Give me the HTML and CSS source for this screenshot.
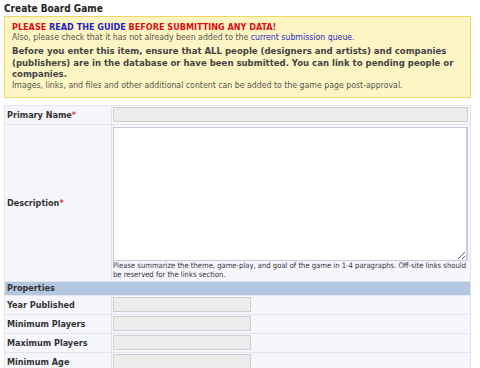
FILE: index.html
```html
<!DOCTYPE html>
<html lang="en">
<head>
    <meta charset="UTF-8">
    <title>Create Board Game</title>
    <link rel="stylesheet" href="styles.css">
</head>
<body>
    <h1 class="page-title">Create Board Game</h1>

    <div class="notice">
        <p class="notice-alert">PLEASE <a href="#" class="guide">READ THE GUIDE</a> BEFORE SUBMITTING ANY DATA!</p>
        <p class="notice-small">Also, please check that it has not already been added to the <a href="#">current submission queue</a>.</p>
        <p class="notice-strong">Before you enter this item, ensure that ALL people (designers and artists) and companies (publishers) are in the database or have been submitted. You can link to pending people or companies.</p>
        <p class="notice-small">Images, links, and files and other additional content can be added to the game page post-approval.</p>
    </div>

    <table class="form-table">
        <tr>
            <th>Primary Name<span class="req">*</span></th>
            <td><input type="text" class="field field-wide"></td>
        </tr>
        <tr>
            <th>Description<span class="req">*</span></th>
            <td>
                <textarea class="field-area"></textarea>
                <p class="help">Please summarize the theme, game-play, and goal of the game in 1-4 paragraphs. Off-site links should be reserved for the links section.</p>
            </td>
        </tr>
        <tr class="section">
            <th colspan="2">Properties</th>
        </tr>
        <tr>
            <th>Year Published</th>
            <td><input type="text" class="field field-short"></td>
        </tr>
        <tr>
            <th>Minimum Players</th>
            <td><input type="text" class="field field-short"></td>
        </tr>
        <tr>
            <th>Maximum Players</th>
            <td><input type="text" class="field field-short"></td>
        </tr>
        <tr>
            <th>Minimum Age</th>
            <td><input type="text" class="field field-short"></td>
        </tr>
    </table>
</body>
</html>
```

FILE: styles.css
```css
/* Base */
* {
    margin: 0;
    padding: 0;
    box-sizing: border-box;
}

body {
    margin: 0;
    padding: 0 9px 0 4px;
    font-family: "DejaVu Sans", Verdana, sans-serif;
    font-stretch: condensed;
    color: #222;
    background: #fff;
}

a {
    text-decoration: none;
    color: #2b2bc8;
}

/* Title */
.page-title {
    font-size: 10px;
    font-weight: bold;
    line-height: 15px;
    padding-top: 1px;
    color: #222;
}

/* Yellow notice box */
.notice {
    background: #fdf5c4;
    border: 1px solid #efd868;
    padding: 5px 7px 7px;
}

.notice p {
    line-height: 10px;
}

.notice-alert {
    font-size: 9px;
    font-weight: bold;
    color: #d81010;
}

.notice-alert .guide {
    color: #2222c0;
}

.notice-small {
    font-size: 8.7px;
    color: #555;
}

.notice .notice-strong {
    font-size: 9.5px;
    font-weight: bold;
    color: #444;
    line-height: 11.5px;
    margin: 3px 0 0;
}

/* Form table */
.form-table {
    width: 100%;
    margin-top: 7px;
    border-collapse: collapse;
    background: #f6f7fd;
    border: 1px solid #e2e4ef;
}

.form-table th,
.form-table td {
    border: 1px solid #e2e4ef;
    vertical-align: middle;
}

.form-table th {
    width: 107px;
    text-align: left;
    font-size: 9px;
    font-weight: bold;
    color: #333;
    padding: 0 2px;
    height: 19px;
}

.form-table td {
    padding: 1px 2px 1px 1px;
}

.req {
    color: #d04040;
}

.field {
    display: block;
    height: 15px;
    background: #ececec;
    border: 1px solid #cfcfcf;
}

.field-wide {
    width: 100%;
}

.field-short {
    width: 138px;
}

.field-area {
    display: block;
    width: 355px;
    height: 134px;
    margin-top: 1px;
    background: #fff;
    border: 1px solid #c9cad8;
    border-right-width: 2px;
    resize: vertical;
}

.help {
    font-size: 7.6px;
    line-height: 9px;
    color: #333;
    padding: 0 0 1px;
}

.form-table .section th {
    background: #b3c7e0;
    height: 14px;
    width: auto;
}
```
